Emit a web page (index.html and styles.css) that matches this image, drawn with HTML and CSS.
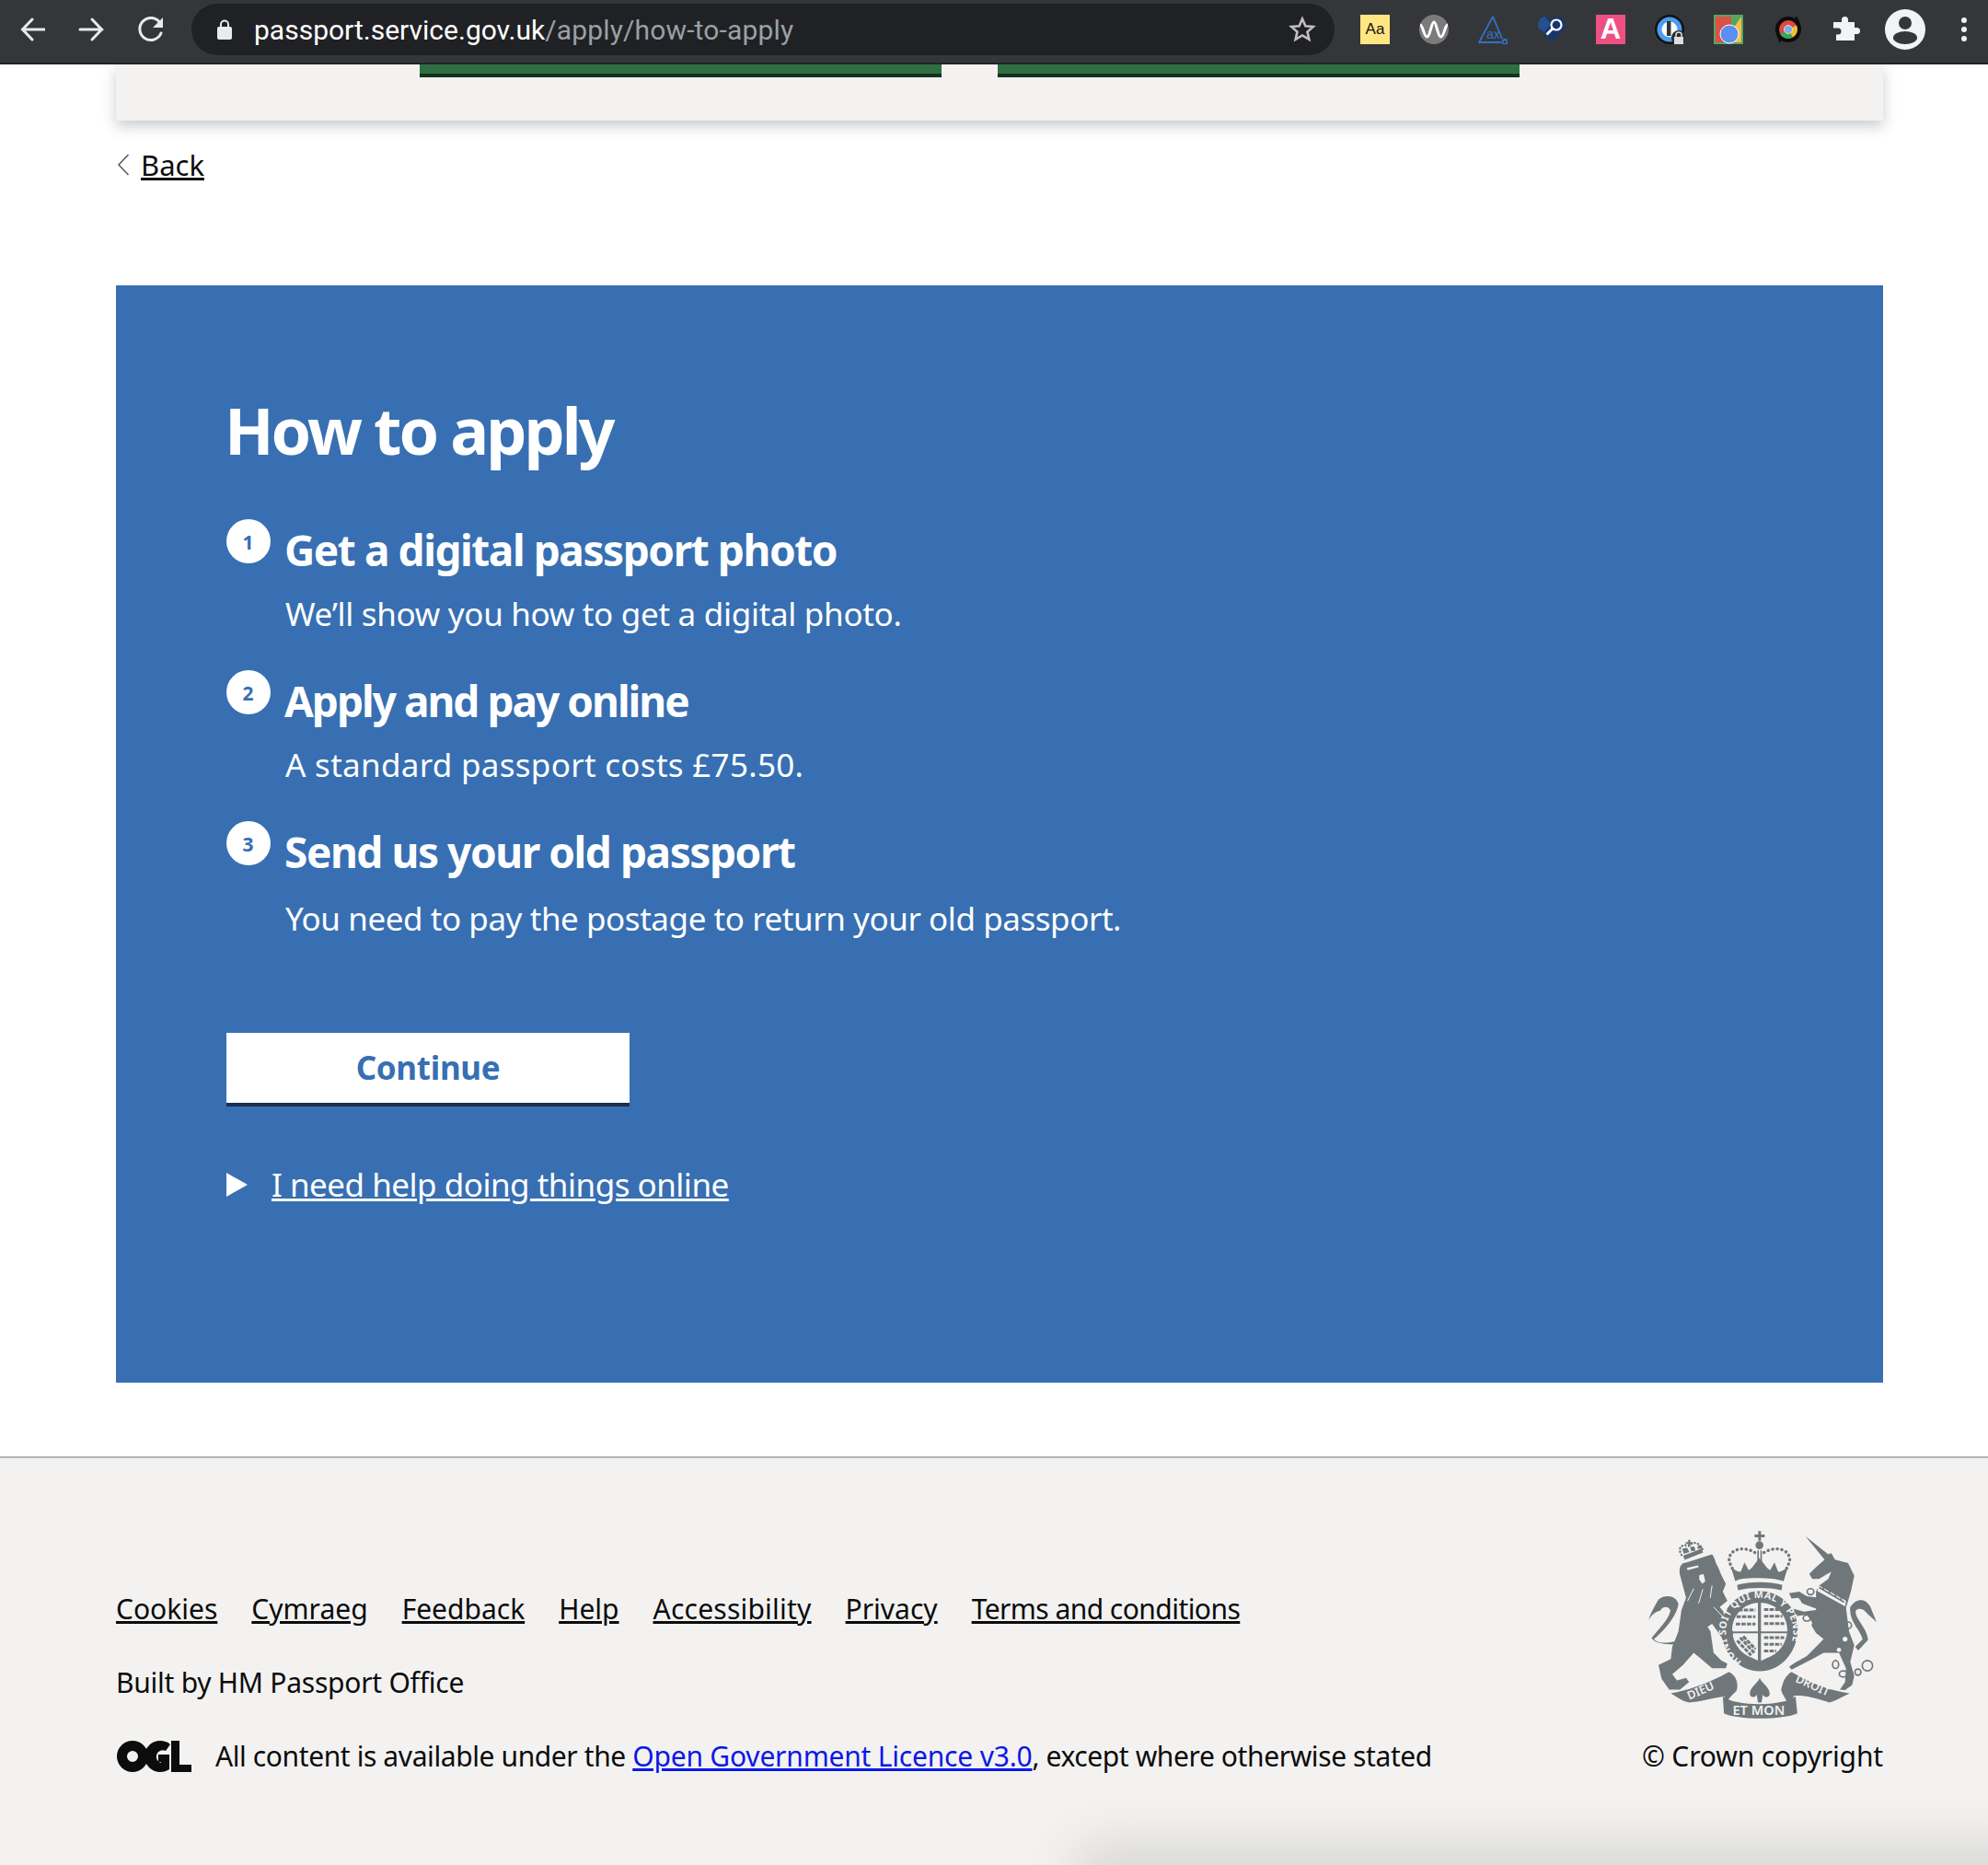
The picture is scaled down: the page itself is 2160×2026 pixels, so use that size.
FILE: index.html
```html
<!DOCTYPE html>
<html lang="en">
<head>
  <meta charset="UTF-8">
  <title>How to apply - Passport</title>
  <link rel="stylesheet" href="styles.css">
</head>
<body>
  <div class="browser-bar">
    <div class="nav-icons">
      <svg width="28" height="28" viewBox="0 0 28 28"><path d="M28 14H4M14 3 3.500 14 14 25" class="stroke-icon"/></svg>
      <svg width="28" height="28" viewBox="0 0 28 28"><path d="M2 14h24M15 3l10.500 11L15 25" class="stroke-icon"/></svg>
      <svg width="32" height="32" viewBox="0 0 32 32"><path d="M26 20a12 12 0 1 1-1-11" class="stroke-icon"/><path d="M28 3v11H17z" fill="#e8eaed"/></svg>
    </div>
    <div class="url-bar">
      <svg class="lock" width="16" height="22" viewBox="0 0 16 22"><path d="M4 9V5.500a4 4 0 0 1 8 0V9" fill="none" stroke="#e8eaed" stroke-width="2"/><rect y="8" width="16" height="14" rx="2" fill="#e8eaed"/></svg>
      <span class="url-host">passport.service.gov.uk</span><span class="url-path">/apply/how-to-apply</span>
      <svg class="star" width="30" height="30" viewBox="0 0 30 30"><path d="M15 3.500l3.400 7.700 8.400.8-6.300 5.600 1.900 8.200-7.400-4.300-7.400 4.300 1.900-8.200L3.200 12l8.400-.8z" fill="none" stroke="#c0c0c0" stroke-width="2.600"/></svg>
    </div>
    <div class="ext-icons">
      <span class="ext ext-aa">Aa</span>
      <svg width="32" height="32" viewBox="0 0 32 32"><circle cx="16" cy="16" r="16" fill="#7b7b7b"/><path d="M1 11c3 0 4 13 7.500 13S13 8 16 8s4 16 7.500 16S28 11 31 11" fill="none" stroke="#fff" stroke-width="3"/></svg>
      <svg width="32" height="32" viewBox="0 0 32 32"><path d="M16 2 1 30h24M16 2l10 24" fill="none" stroke="#2f73c4" stroke-width="1.800"/><circle cx="29" cy="29.500" r="2.500" fill="none" stroke="#2f73c4" stroke-width="1.800"/><text x="9" y="26" class="ext-ax">ax</text></svg>
      <svg width="32" height="32" viewBox="0 0 32 32"><path d="M16 30 2 15C-1 9 3 2 9 2c3 0 5 1 7 4 2-3 4-4 7-4 6 0 10 7 7 13z" fill="#17376b"/><path d="M2 15C-1 9 3 2 9 2l6 8-7 9z" fill="#274f8e"/><circle cx="21" cy="11" r="5.500" fill="#17376b" stroke="#fff" stroke-width="2.200"/><path d="M17 15l-6.500 6.500" stroke="#fff" stroke-width="2.800"/></svg>
      <span class="ext ext-a">A</span>
      <svg width="32" height="32" viewBox="0 0 32 32"><circle cx="16" cy="16" r="16" fill="#111"/><circle cx="16" cy="16" r="13.500" fill="#4a9df0"/><circle cx="16" cy="16" r="8.500" fill="#fff"/><rect x="13" y="7" width="4.500" height="16" fill="#333"/><circle cx="26" cy="25" r="8" fill="#2d2d2f"/><rect x="21" y="24" width="10" height="8" fill="#ddd"/><path d="M23 24v-2a3 3 0 0 1 6 0v2" fill="none" stroke="#ddd" stroke-width="1.500"/></svg>
      <svg width="32" height="32" viewBox="0 0 32 32"><rect width="32" height="32" fill="#f5bf4f"/><path d="M2 2h17v14l-8 14H2z" fill="#dd5044"/><path d="M19 2h11L19 18z" fill="#57a55d"/><path d="M1 1h30v30H1z" fill="none" stroke="#58a660" stroke-width="2"/><circle cx="17" cy="21" r="10" fill="#5c8ff0" stroke="#fff" stroke-width="1"/></svg>
      <svg width="32" height="32" viewBox="0 0 32 32"><circle cx="17" cy="16" r="14" fill="#0c0c0c"/><path d="M26 1l4 9-7-2zM8 31l-4-9 7 2z" fill="#0c0c0c"/><circle cx="17" cy="16" r="10" fill="#e04a3b"/><path d="M17 16 8 21a10 10 0 0 0 14 3.500z" fill="#39a853"/><path d="M17 16l9-4.500a10 10 0 0 1-4 13z" fill="#f3c02f"/><circle cx="17" cy="16" r="4.500" fill="#7fa8ef" stroke="#ddd"/></svg>
      <svg width="32" height="32" viewBox="0 0 32 32"><path d="M6 9h6V6.500a3.500 3.500 0 0 1 7 0V9h7v6h2.500a3.500 3.500 0 0 1 0 7H26v7H6v-6.500h2a3.500 3.500 0 0 0 0-7H3V9z" fill="#f1f3f4" transform="translate(-1 -1)"/></svg>
      <svg class="avatar" width="44" height="44" viewBox="0 0 44 44"><circle cx="22" cy="22" r="22" fill="#f1f3f4"/><circle cx="22" cy="15" r="7" fill="#35363a"/><ellipse cx="22" cy="31" rx="13" ry="7" fill="#35363a"/></svg>
      <svg class="dots" width="8" height="30" viewBox="0 0 8 30"><circle cx="4" cy="5" r="3" fill="#f1f3f4"/><circle cx="4" cy="15" r="3" fill="#f1f3f4"/><circle cx="4" cy="25" r="3" fill="#f1f3f4"/></svg>
    </div>
  </div>

  <div class="top-card">
    <div class="green-btn"></div>
    <div class="green-btn"></div>
  </div>

  <main class="content">
    <a class="back-link" href="#">
      <svg width="14" height="24" viewBox="0 0 14 24"><path d="M12.500 1 2 12l10.500 11" fill="none" stroke="#505a5f" stroke-width="1.500"/></svg>
      <span>Back</span>
    </a>

    <section class="apply-panel">
      <h1>How to apply</h1>
      <ol class="steps">
        <li class="step">
          <span class="step-num">1</span>
          <div>
            <h2>Get a digital passport photo</h2>
            <p>We’ll show you how to get a digital photo.</p>
          </div>
        </li>
        <li class="step step-pay">
          <span class="step-num">2</span>
          <div>
            <h2>Apply and pay online</h2>
            <p>A standard passport costs £75.50.</p>
          </div>
        </li>
        <li class="step step-post">
          <span class="step-num">3</span>
          <div>
            <h2>Send us your old passport</h2>
            <p>You need to pay the postage to return your old passport.</p>
          </div>
        </li>
      </ol>
      <a class="continue-btn" href="#">Continue</a>
      <div class="help-row">
        <span class="help-arrow"></span>
        <a href="#">I need help doing things online</a>
      </div>
    </section>
  </main>

  <footer class="site-footer">
    <div class="footer-left">
      <ul class="footer-links">
        <li><a href="#">Cookies</a></li>
        <li><a href="#">Cymraeg</a></li>
        <li><a href="#">Feedback</a></li>
        <li><a href="#">Help</a></li>
        <li class="accessibility"><a href="#">Accessibility</a></li>
        <li><a href="#">Privacy</a></li>
        <li class="terms"><a href="#">Terms and conditions</a></li>
      </ul>
      <p class="built-by">Built by HM Passport Office</p>
      <div class="licence">
        <svg class="ogl" width="82" height="36" viewBox="0 0 82 36"><path d="M18 1a17 17 0 1 0 0 34 17 17 0 0 0 0-34zm0 11a6 6 0 1 1 0 12 6 6 0 0 1 0-12z" fill="#0b0c0c"/><path d="M48 1a17 17 0 1 0 0 34c4 0 7-1 10-3V16H46v8h3v1a7 7 0 1 1 5-13l5-7c-3-3-7-4-11-4z" fill="#0b0c0c"/><path d="M60 1h9v26h13v8H60z" fill="#0b0c0c"/></svg>
        <span>All content is available under the <a href="#">Open Government Licence v3.0</a>, except where otherwise stated</span>
      </div>
    </div>
    <div class="footer-right">
      <svg class="crest" width="254" height="206" viewBox="85 65 760 620">
        <g fill="#6f777b">
          <!-- royal crown -->
          <path d="M451 72h9v11h12v9h-12v11h-9V92h-12v-9h12z"/>
          <circle cx="455" cy="118" r="13"/>
          <path d="M448 135h5v45h-5zM458 135h5v45h-5z"/>
          <path d="M362 190c12 8 24 18 32 14l12-30 14 26 10-8 25-32 25 32 10 8 14-26 12 30c8 4 20-6 32-14l-14 46c-36-14-144-14-158 0z"/>
          <path d="M382 248c40-12 108-12 148 0l-3 17c-40-10-102-10-142 0z"/>
          <g fill="none" stroke="#6f777b" stroke-width="10" stroke-dasharray="1 14" stroke-linecap="round">
            <path d="M440 142c-35-22-88-14-84 30l12 26"/>
            <path d="M470 142c35-22 88-14 84 30l-12 26"/>
          </g>
          <!-- lion crown -->
          <path d="M222 100h7v8h8v6h-8v8h-7v-8h-8v-6h8z"/>
          <path d="M205 152l60-22 6 12-60 24z"/>
          <path d="M208 146l-6-16 16-4 8 14zM232 138l-4-14 14-2 4 14zM252 130l2-12 14 4-4 8z"/>
          <g fill="none" stroke="#6f777b" stroke-width="7" stroke-dasharray="1 10" stroke-linecap="round">
            <path d="M200 150c-14-26 2-36 24-30 16-16 34-12 46 14"/>
          </g>
          <!-- lion -->
          <path d="M195 215c-5-25 5-40 20-40l85-27c10 12 10 27 20 42l10 25 15 30-10 25 15 30-25 20 20 25 25 60-5 15-30 5-20-30-15-20-15 10 10 15 10 70 25 25 20 10-5 15h-45l-35-30-25-20-35 40-35 30 15 20 30-8 10 13-30 25h-35l-25-35-10-45 40-20 5-40 20-50 10-70 15-40z"/>
          <path d="M190 430c-40 10-70 10-80-5 30-25 75-75 80-115-5-25-40-35-65-15-15 25-25 45-33 67 10-14 20-26 38-30 10-18 30-14 34 0-6 30-40 60-62 90 12 18 50 22 90 20z"/>
          <!-- unicorn -->
          <path d="M605 88L680 148L690 144L702 165L745 176L765 218L755 265L745 300L738 322L748 400L765 445L752 500L765 545L758 575L735 592L718 590L735 565L738 520L715 470L665 470L625 492L590 510L560 525L552 515L575 500L610 480L640 450L665 425L640 405L625 380L640 330L640 270L650 250L680 228L690 205L672 215L650 228L628 228L618 212L640 190L668 165Z"/>
          <path d="M650 290l-40-5-25-15-33 5 8 17 22-2 18 20 40 15zM640 330l-40 5-35-10 10 25 35-5 18 27 22-2z"/>
          <path d="M752 320c20-30 50-30 66 0l20 50c-10-12-24-20-36-34-6-10-24-14-32-4-6 24 38 56 40 96l-32 34-10-12 24-24c-6-30-46-60-40-106z"/>
          <g fill="none" stroke="#6f777b" stroke-width="5">
            <ellipse cx="622" cy="270" rx="11" ry="10"/>
            <circle cx="602" cy="298" r="9"/>
            <ellipse cx="610" cy="356" rx="12" ry="10"/>
            <circle cx="745" cy="380" r="11"/>
            <ellipse cx="704" cy="508" rx="10" ry="13"/>
            <ellipse cx="729" cy="539" rx="13" ry="10"/>
            <circle cx="777" cy="533" r="10"/>
            <circle cx="808" cy="512" r="17"/>
          </g>
        </g>
        <!-- light cut-outs on the supporters -->
        <g fill="#f3f2f1">
          <path d="M646 248l92 52-3 18-90-50z"/>
          <circle cx="735" cy="425" r="8"/>
          <circle cx="715" cy="460" r="7"/>
          <path d="M218 192l36-8 2 6-36 10zM258 216l14-4 6 24-10 8-10-14z"/>
        </g>
        <path d="M650 256l82 48M664 252v12M684 264v12M704 276v12M722 286v12" fill="none" stroke="#6f777b" stroke-width="5"/>
        <g fill="none" stroke="#f3f2f1" stroke-width="3">
          <path d="M240 260l-20 40M270 262l-14 46M300 250l-6 40M305 320l50 52"/>
        </g>
        <!-- garter ring and shield -->
        <path fill="#6f777b" fill-rule="evenodd" d="M456 268c72 0 124 58 124 124 0 72-52 138-124 138s-126-66-126-138c0-66 54-124 126-124zm0 42c-50 0-90 36-90 84 0 50 40 96 90 96s90-46 90-96c0-48-40-84-90-84z"/>
        <path d="M368 392c0-50 40-86 88-86s88 36 88 86c0 50-30 80-88 106-58-26-88-56-88-106z" fill="#f3f2f1"/>
        <g fill="#6f777b">
          <path d="M450 302h10v200h-10z"/>
          <path d="M366 400h180v6H366z"/>
        </g>
        <g fill="none" stroke="#6f777b" stroke-width="9" stroke-dasharray="14 4">
          <path d="M386 330h56M380 352h62M378 376h64"/>
          <path d="M470 328h52M470 350h60M470 374h66"/>
          <path d="M470 420h66M470 442h58M470 464h40"/>
          <path d="M392 420l46 50M382 430l46 48M402 416l40 42"/>
        </g>
        <!-- motto ribbon -->
        <g fill="#6f777b">
          <path d="M165 602c50-8 120-30 190-70 22 10 32 34 26 60-10 14-26 22-32 42-4-8-8-14-8-22-50 8-80 18-116 20-22-4-40-18-60-30z"/>
          <path d="M335 612c40 34 196 34 238 0l6 56c-44 22-200 22-240 0z"/>
          <path d="M526 590c6-28 14-46 34-58 66 40 130 62 190 70-28 14-50 26-66 30-50-16-82-24-116-22-4 12-14 22-18 30-6-18-20-30-24-50z"/>
          <path d="M456 552c8 20 36 32 32 56-8 10-18 8-22-2l-4 26h-12l-4-26c-4 10-14 12-22 2-4-24 24-36 32-56z"/>
        </g>
        <g class="crest-text">
          <path id="garter-arc" d="M398 498A110 112 0 1 1 524 490" fill="none"/>
          <text class="garter-text"><textPath href="#garter-arc">HONI SOIT QUI MAL Y PENSE</textPath></text>
          <text x="367" y="673" class="ribbon-mid">ET MON</text>
          <text x="226" y="624" class="ribbon-side" transform="rotate(-24 226 624)">DIEU</text>
          <text x="570" y="564" class="ribbon-side" transform="rotate(24 570 564)">DROIT</text>
        </g>
      </svg>
      <p>© Crown copyright</p>
    </div>
    <div class="bottom-shadow"></div>
  </footer>
</body>
</html>
```

FILE: styles.css
```css
* {
  box-sizing: border-box;
  margin: 0;
  padding: 0;
}

body {
  font-family: 'Noto Sans', 'Open Sans', Arial, sans-serif;
  background-color: #ffffff;
  color: #0b0c0c;
  width: 2160px;
  height: 2026px;
  overflow: hidden;
  display: flex;
  flex-direction: column;
}

a {
  color: inherit;
}

/* browser chrome */
.browser-bar {
  height: 70px;
  flex-shrink: 0;
  background: #35363a;
  border-bottom: 2px solid #222326;
  display: flex;
  align-items: flex-start;
  position: relative;
  z-index: 2;
}

.nav-icons {
  width: 208px;
  height: 64px;
  padding-left: 21px;
  display: flex;
  align-items: center;
  gap: 36px;
}

.stroke-icon {
  fill: none;
  stroke: #e8eaed;
  stroke-width: 3;
  stroke-linecap: round;
}

.url-bar {
  width: 1242px;
  height: 56px;
  margin-top: 4px;
  padding: 0 20px 0 28px;
  background: #202124;
  border-radius: 28px;
  display: flex;
  align-items: center;
  font-family: Roboto, sans-serif;
  font-size: 30px;
}

.lock {
  margin-right: 24px;
}

.url-host {
  color: #ffffff;
}

.url-path {
  color: #9aa0a6;
  letter-spacing: 0.15px;
}

.star {
  margin-left: auto;
}

.ext-icons {
  flex: 1;
  height: 64px;
  padding-left: 28px;
  display: flex;
  align-items: center;
  gap: 32px;
}

.ext {
  width: 32px;
  height: 32px;
  display: flex;
  align-items: center;
  justify-content: center;
  font-family: 'Liberation Sans', sans-serif;
}

.ext-aa {
  background: #ffe680;
  color: #111;
  font-size: 17px;
}

.ext-a {
  background: #ee5082;
  color: #fff;
  font-size: 31px;
  font-weight: 700;
}

.ext-ax {
  fill: #2f73c4;
  font-family: 'Liberation Sans', sans-serif;
  font-size: 14px;
}

.avatar {
  margin-left: -6px;
}

.dots {
  margin-left: 6px;
}

/* cropped card from the section above */
.top-card {
  height: 61px;
  margin: 0 114px 0 126px;
  flex-shrink: 0;
  background: #f3f2f1;
  box-shadow: 0 6px 14px rgba(60, 70, 80, 0.28);
  display: flex;
  align-items: flex-start;
  gap: 61px;
  padding-left: 330px;
}

.green-btn {
  width: 567px;
  height: 14px;
  background: #2f6f42;
  border-bottom: 4px solid #14321d;
}

.content {
  padding: 0 114px 0 126px;
  flex-shrink: 0;
}

.back-link {
  display: inline-flex;
  align-items: center;
  gap: 12px;
  margin-top: 28px;
  margin-left: 1px;
  font-size: 31px;
  line-height: 40px;
  text-decoration: none;
}

.back-link span {
  text-decoration: underline;
}

.apply-panel {
  height: 1192px;
  margin-top: 111px;
  padding: 117px 120px 0;
  background: #376fb2;
  color: #ffffff;
}

h1 {
  margin-left: -2px;
  font-size: 70px;
  line-height: 80px;
  font-weight: 700;
  letter-spacing: -3px;
}

.steps {
  list-style: none;
  margin-top: 57px;
}

.step {
  display: flex;
  gap: 16px;
  height: 164px;
}

.step-num {
  width: 48px;
  height: 48px;
  flex-shrink: 0;
  padding: 2px 1px 0 0;
  border-radius: 50%;
  background: #ffffff;
  color: #376fb2;
  font-size: 21px;
  font-weight: 700;
  display: flex;
  align-items: center;
  justify-content: center;
}

h2 {
  margin: 3px 0 0 -1px;
  font-size: 46px;
  line-height: 60px;
  font-weight: 700;
  letter-spacing: -1.45px;
}

.step p {
  margin-top: 15px;
  font-size: 35px;
  line-height: 50px;
  letter-spacing: -0.3px;
}

.step-pay h2 {
  letter-spacing: -2px;
}

.step-pay p {
  margin-top: 15px;
  letter-spacing: 0.3px;
}

.step-post p {
  margin-top: 18px;
  letter-spacing: -0.44px;
}

.continue-btn {
  display: block;
  width: 438px;
  height: 80px;
  margin-top: 66px;
  background: #ffffff;
  border-bottom: 4px solid #1a2f50;
  color: #376fb2;
  font-size: 35px;
  line-height: 76px;
  font-weight: 700;
  letter-spacing: -0.3px;
  text-align: center;
  text-decoration: none;
}

.help-row {
  margin-top: 60px;
  display: flex;
  align-items: center;
  gap: 26px;
  font-size: 35px;
  line-height: 50px;
  letter-spacing: -0.5px;
}

.help-arrow {
  width: 0;
  height: 0;
  border-left: 23px solid #ffffff;
  border-top: 13px solid transparent;
  border-bottom: 13px solid transparent;
}

/* footer */
.site-footer {
  flex: 1;
  margin-top: 80px;
  padding: 0 114px 0 126px;
  background: #f3f2f1;
  border-top: 2px solid #b1b4b6;
  display: flex;
  justify-content: space-between;
  align-items: flex-start;
  position: relative;
  overflow: hidden;
}

.footer-left {
  padding-top: 144px;
  font-size: 30px;
  line-height: 40px;
}

.footer-links {
  list-style: none;
  display: flex;
  gap: 37px;
}

.accessibility {
  letter-spacing: 0.22px;
}

.terms {
  letter-spacing: -0.55px;
}

.built-by {
  margin-top: 40px;
  letter-spacing: -0.25px;
}

.licence {
  margin-top: 40px;
  display: flex;
  align-items: center;
  gap: 26px;
  letter-spacing: -0.4px;
}

.licence a {
  color: #0b18e8;
  letter-spacing: -0.2px;
}

.footer-right {
  padding-top: 77px;
  font-size: 30px;
  line-height: 40px;
  letter-spacing: -0.15px;
  text-align: right;
}

.crest {
  display: block;
  margin: 0 4px 0 auto;
}

.crest-text {
  fill: #f3f2f1;
  font-weight: 700;
  letter-spacing: 0;
}

.garter-text {
  font-size: 32px;
  letter-spacing: 1.5px;
}

.ribbon-mid {
  font-size: 44px;
  font-weight: 600;
}

.ribbon-side {
  font-size: 38px;
  font-weight: 600;
}

.footer-right p {
  margin-top: 21px;
}

.bottom-shadow {
  position: absolute;
  left: 1190px;
  right: -40px;
  bottom: -60px;
  height: 60px;
  box-shadow: 0 0 60px 20px rgba(0, 0, 0, 0.12);
}
```
